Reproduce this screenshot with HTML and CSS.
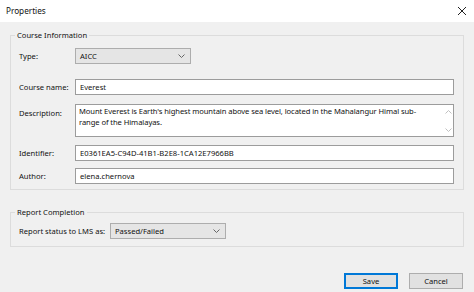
FILE: index.html
```html
<!DOCTYPE html>
<html lang="en">
    <head>
        <meta charset="UTF-8" />
        <meta name="viewport" content="width=device-width, initial-scale=1.0" />
        <title>Properties</title>
        <link rel="stylesheet" href="styles.css">
    </head>
    <body>
        <div class="window">
            <!-- title bar -->
            <div class="titlebar">
                <span class="title">Properties</span>
                <svg class="close" width="10" height="10" viewBox="0 0 10 10">
                    <path d="M1 1L9 9M9 1L1 9" stroke="#222" stroke-width="1" fill="none" />
                </svg>
            </div>

            <div class="body">
                <!-- course info -->
                <fieldset class="group group-course">
                    <legend>Course Information</legend>
                    <div class="row row-type">
                        <label>Type:</label>
                        <div class="combo combo-type">
                            <span>AICC</span>
                            <svg width="7" height="4" viewBox="0 0 7 4"><path d="M0.5 0.5L3.5 3.5L6.5 0.5" stroke="#666" fill="none" /></svg>
                        </div>
                    </div>
                    <div class="row row-name">
                        <label>Course name:</label>
                        <div class="edit">Everest</div>
                    </div>
                    <div class="row row-desc">
                        <label>Description:</label>
                        <div class="edit memo">
                            <div class="memo-text">Mount Everest is Earth's highest mountain above sea level, located in the Mahalangur Himal sub-<br>range of the Himalayas.</div>
                            <div class="scroll">
                                <svg width="7" height="4" viewBox="0 0 7 4"><path d="M0.5 3.5L3.5 0.5L6.5 3.5" stroke="#c0c0c0" fill="none" /></svg>
                                <svg width="7" height="4" viewBox="0 0 7 4"><path d="M0.5 0.5L3.5 3.5L6.5 0.5" stroke="#c0c0c0" fill="none" /></svg>
                            </div>
                        </div>
                    </div>
                    <div class="row row-id">
                        <label>Identifier:</label>
                        <div class="edit">E0361EA5-C94D-41B1-B2E8-1CA12E7966BB</div>
                    </div>
                    <div class="row row-author">
                        <label>Author:</label>
                        <div class="edit">elena.chernova</div>
                    </div>
                </fieldset>

                <!-- report -->
                <fieldset class="group group-report">
                    <legend>Report Completion</legend>
                    <div class="row-report">
                        <label>Report status to LMS as:</label>
                        <div class="combo combo-report">
                            <span>Passed/Failed</span>
                            <svg width="7" height="4" viewBox="0 0 7 4"><path d="M0.5 0.5L3.5 3.5L6.5 0.5" stroke="#666" fill="none" /></svg>
                        </div>
                    </div>
                </fieldset>

                <div class="buttons">
                    <button class="btn btn-save">Save</button>
                    <button class="btn">Cancel</button>
                </div>
            </div>
        </div>
    </body>
</html>
```

FILE: styles.css
```css
body {
    margin: 0;
    padding: 0;
    background-color: #f0f0f0;
    font-family: "Noto Sans", "Open Sans", sans-serif;
    font-size: 7.6px;
    color: #111;
}

.window {
    width: 474px;
    height: 292px;
    overflow: hidden;
}

.titlebar {
    height: 22px;
    background-color: #fff;
    display: flex;
    justify-content: space-between;
    align-items: center;
    padding: 0 7px 1px 6px;
    box-sizing: border-box;
}

.title {
    font-size: 8.2px;
}

.close {
    display: block;
}

.body {
    display: flex;
    flex-direction: column;
}

.group {
    border: 1px solid #dcdcdc;
    margin: 0 10px 0 10px;
    padding: 0 9px 0 8px;
    min-width: 0;
}

.group legend {
    padding: 0 2px;
    margin-left: -4px;
    line-height: 11px;
}

.group-course {
    margin-top: 8px;
    padding-top: 7px;
    padding-bottom: 5px;
}

.group-report {
    margin-top: 17px;
    padding-top: 5px;
    padding-bottom: 7px;
}

.row {
    display: flex;
    align-items: center;
}

.row label {
    width: 56px;
    flex-shrink: 0;
}

.row-name {
    margin-top: 15px;
}

.row-desc {
    margin-top: 9px;
    align-items: flex-start;
}

.row-desc label {
    padding-top: 4px;
}

.row-id {
    margin-top: 8px;
}

.row-author {
    margin-top: 7px;
}

.edit {
    flex: 1;
    height: 16px;
    box-sizing: border-box;
    border: 1px solid #9c9c9c;
    background-color: #fff;
    padding: 0 4px;
    line-height: 14px;
    white-space: nowrap;
}

.memo {
    height: 33px;
    display: flex;
    padding: 1px 0 0 3px;
    white-space: normal;
}

.memo-text {
    flex: 1;
    line-height: 11px;
    letter-spacing: -0.08px;
}

.scroll {
    width: 10px;
    display: flex;
    flex-direction: column;
    justify-content: space-between;
    align-items: center;
    padding: 4px 0 4px;
}

.scroll svg {
    display: block;
}

.combo {
    height: 16px;
    box-sizing: border-box;
    border: 1px solid #adadad;
    background-color: #e5e5e5;
    display: flex;
    justify-content: space-between;
    align-items: center;
    padding: 0 5px 0 4px;
}

.combo svg {
    display: block;
}

.combo-type {
    width: 116px;
}

.row-report {
    display: flex;
    align-items: center;
}

.row-report label {
    width: 91px;
}

.combo-report {
    width: 116px;
}

.buttons {
    display: flex;
    justify-content: flex-end;
    gap: 11px;
    margin: 26px 11px 0 0;
}

.btn {
    width: 54px;
    height: 16px;
    padding: 0;
    border: 1px solid #adadad;
    background-color: #e1e1e1;
    font-family: inherit;
    font-size: inherit;
    color: #111;
    line-height: 14px;
}

.btn-save {
    border: 1px solid #0078d7;
    box-shadow: inset 0 0 0 1px #0078d7;
}
```
